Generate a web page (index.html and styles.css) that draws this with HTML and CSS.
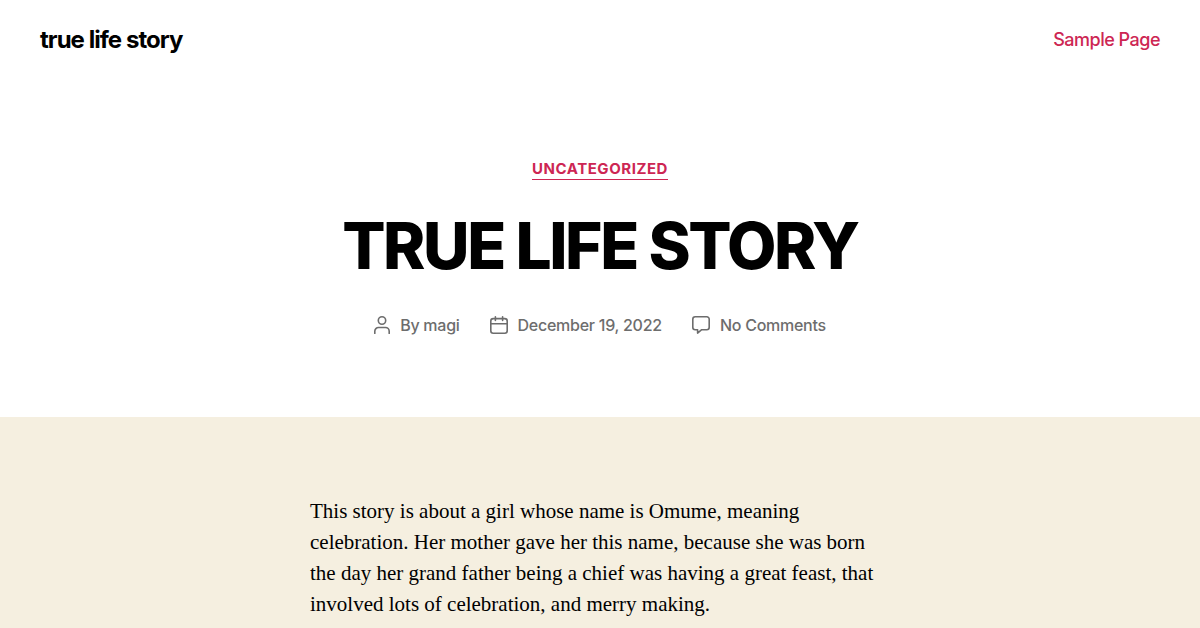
FILE: index.html
```html
<!DOCTYPE html>
<html lang="en">
<head>
    <meta charset="UTF-8">
    <meta name="viewport" content="width=device-width, initial-scale=1.0">
    <title>TRUE LIFE STORY - true life story</title>
    <link rel="stylesheet" href="styles.css">
</head>
<body>
    <header class="site-header">
        <a class="site-title" href="#">true life story</a>
        <nav class="primary-menu">
            <a href="#">Sample Page</a>
        </nav>
    </header>

    <main>
        <article>
            <header class="entry-header">
                <a class="entry-category" href="#">Uncategorized</a>
                <h1 class="entry-title">TRUE LIFE STORY</h1>
                <ul class="post-meta">
                    <li>
                        <svg width="16" height="18" viewBox="0 0 16 18" aria-hidden="true">
                            <circle cx="8" cy="4.5" r="3.7"/>
                            <path d="M0.8 17.4V15.2a3.7 3.7 0 0 1 3.7-3.7h7a3.7 3.7 0 0 1 3.7 3.7v2.2"/>
                        </svg>
                        <span>By <a href="#">magi</a></span>
                    </li>
                    <li>
                        <svg width="18" height="18" viewBox="0 0 18 18" aria-hidden="true">
                            <rect x="0.8" y="2.6" width="16.4" height="14.6" rx="2.4"/>
                            <path d="M0.8 7.7h16.4M5.4 0.8v3.6M12.6 0.8v3.6"/>
                        </svg>
                        <a href="#">December 19, 2022</a>
                    </li>
                    <li>
                        <svg width="18" height="18" viewBox="0 0 18 18" aria-hidden="true">
                            <path d="M3.2 0.8h11.6a2.4 2.4 0 0 1 2.4 2.4v8.1a2.4 2.4 0 0 1-2.4 2.4H9.7L5.6 17.1V13.7H3.2a2.4 2.4 0 0 1-2.4-2.4V3.2a2.4 2.4 0 0 1 2.4-2.4z"/>
                        </svg>
                        <a href="#">No Comments</a>
                    </li>
                </ul>
            </header>

            <div class="entry-content">
                <p>This story is about a girl whose name is Omume, meaning celebration. Her mother gave her this name, because she was born the day her grand father being a chief was having a great feast, that involved lots of celebration, and merry making.</p>
            </div>
        </article>
    </main>
</body>
</html>
```
FILE: styles.css
```css
body {
    margin: 0;
    background: #f5efe0;
    color: #000;
    font-family: Inter, "Liberation Sans", sans-serif;
    font-size: 18px;
}
a {
    color: inherit;
    text-decoration: none;
}
a:hover {
    text-decoration: underline;
}
.site-header {
    display: flex;
    align-items: center;
    justify-content: space-between;
    padding: 24px 40px;
    background: #fff;
    line-height: 32px;
}
.site-title {
    font-size: 24px;
    font-weight: 700;
    letter-spacing: -0.04em;
}
.primary-menu {
    color: #cd2653;
    font-weight: 500;
    letter-spacing: -0.0277em;
}
.entry-header {
    padding: 80px 40px;
    background: #fff;
    text-align: center;
}
.entry-category {
    display: block;
    width: fit-content;
    margin: 0 auto;
    padding-bottom: 1px;
    border-bottom: 1px solid #cd2653;
    color: #cd2653;
    font-size: 15px;
    font-weight: 700;
    line-height: 18px;
    letter-spacing: 0.0366em;
    text-transform: uppercase;
}
.entry-title {
    margin: 30px 0 31px;
    font-size: 64px;
    font-weight: 800;
    line-height: 72px;
    letter-spacing: -0.0375em;
}
.post-meta {
    display: flex;
    flex-wrap: wrap;
    justify-content: center;
    gap: 8px 30px;
    margin: 0;
    padding: 0;
    color: #6d6d6d;
    font-size: 16px;
    font-weight: 500;
    line-height: 24px;
    letter-spacing: -0.016em;
    list-style: none;
}
.post-meta li {
    display: flex;
    align-items: center;
    gap: 10px;
}
.post-meta svg {
    fill: none;
    stroke: #6d6d6d;
    stroke-width: 1.6;
    stroke-linecap: round;
    stroke-linejoin: round;
}
.entry-content {
    max-width: 580px;
    margin: 0 auto;
    padding: 79px 40px;
    font-family: "Liberation Serif", serif;
    font-size: 21px;
    line-height: 31px;
}
.entry-content p {
    margin: 0;
}
```
